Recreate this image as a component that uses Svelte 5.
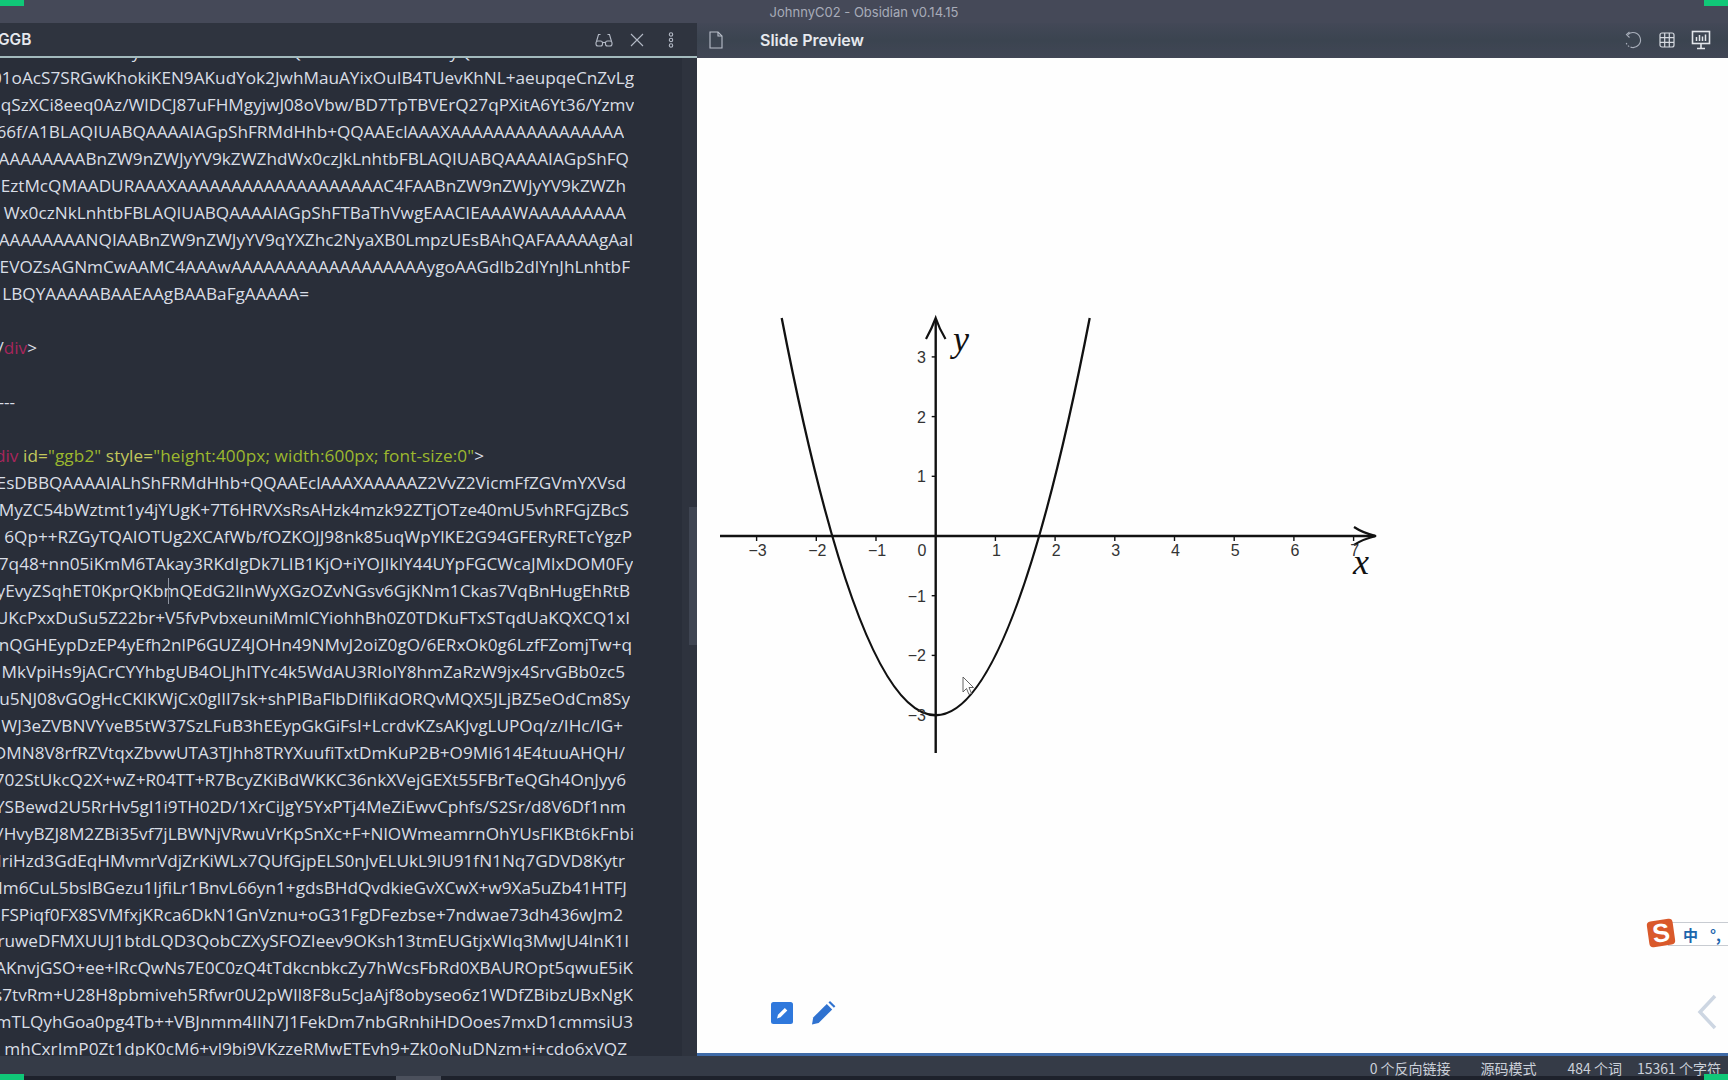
<script>
  const code = [
    { end: 630, text: 'ZGFsbHRoaXNsaWdybGluZXlzaGlkZGVuQW5kU29tZU90aGVyQ29udGVudGhlcmU2' },
    { end: 634, text: '01oAcS7SRGwKhokiKEN9AKudYok2JwhMauAYixOuIB4TUevKhNL+aeupqeCnZvLg' },
    { end: 634, text: 'qSzXCi8eeq0Az/WlDCJ87uFHMgyjwJ08oVbw/BD7TpTBVErQ27qPXitA6Yt36/Yzmv' },
    { end: 624, text: '66f/A1BLAQIUABQAAAAIAGpShFRMdHhb+QQAAEclAAAXAAAAAAAAAAAAAAAA' },
    { end: 629, text: 'AAAAAAAABnZW9nZWJyYV9kZWZhdWx0czJkLnhtbFBLAQIUABQAAAAIAGpShFQ' },
    { end: 626, text: 'EztMcQMAADURAAAXAAAAAAAAAAAAAAAAAAAC4FAABnZW9nZWJyYV9kZWZh' },
    { end: 626, text: 'Wx0czNkLnhtbFBLAQIUABQAAAAIAGpShFTBaThVwgEAACIEAAAWAAAAAAAAA' },
    { end: 633, text: 'AAAAAAAANQIAABnZW9nZWJyYV9qYXZhc2NyaXB0LmpzUEsBAhQAFAAAAAgAal' },
    { end: 630, text: 'EVOZsAGNmCwAAMC4AAAwAAAAAAAAAAAAAAAAAAygoAAGdlb2dlYnJhLnhtbF' },
    { end: 309, text: 'LBQYAAAAABAAEAAgBAABaFgAAAAA=' },
    { end: 0, text: '' },
    { end: 37, parts: [['/', ''], ['div', 'tag'], ['>', '']] },
    { end: 0, text: '' },
    { end: 15, text: '---' },
    { end: 0, text: '' },
    { end: 484, parts: [['<', ''], ['div', 'tag'], [' id=', 'attr'], ['"ggb2"', 'str'], [' style=', 'attr'], ['"height:400px; width:600px; font-size:0"', 'str'], ['>', '']] },
    { end: 626, text: 'EsDBBQAAAAIALhShFRMdHhb+QQAAEclAAAXAAAAAZ2VvZ2VicmFfZGVmYXVsd' },
    { end: 629, text: 'MyZC54bWztmt1y4jYUgK+7T6HRVXsRsAHzk4mzk92ZTjOTze40mU5vhRFGjZBcS' },
    { end: 632, text: '6Qp++RZGyTQAIOTUg2XCAfWb/fOZKOJJ98nk85uqWpYlKE2G94GFERyRETcYgzP' },
    { end: 633, text: '7q48+nn05iKmM6TAkay3RKdIgDk7LIB1KjO+iYOJIkIY44UYpFGCWcaJMlxDOM0Fy' },
    { end: 630, text: 'yEvyZSqhET0KprQKbmQEdG2lInWyXGzOZvNGsv6GjKNm1Ckas7VqBnHugEhRtB' },
    { end: 630, text: 'bUKcPxxDuSu5Z22br+V5fvPvbxeuniMmlCYiohhBh0Z0TDKuFTxSTqdUaKQXCQ1xI' },
    { end: 632, text: 'nQGHEypDzEP4yEfh2nlP6GUZ4JOHn49NMvJ2oiZ0gO/6ERxOk0g6LzfFZomjTw+q' },
    { end: 625, text: 'MkVpiHs9jACrCYYhbgUB4OLJhITYc4k5WdAU3RIoIY8hmZaRzW9jx4SrvGBb0zc5' },
    { end: 630, text: 'u5NJ08vGOgHcCKlKWjCx0glII7sk+shPIBaFlbDlfIiKdORQvMQX5JLjBZ5eOdCm8Sy' },
    { end: 623, text: 'WJ3eZVBNVYveB5tW37SzLFuB3hEEypGkGiFsI+LcrdvKZsAKJvgLUPOq/z/IHc/IG+' },
    { end: 625, text: 'DMN8V8rfRZVtqxZbvwUTA3TJhh8TRYXuufiTxtDmKuP2B+O9MI614E4tuuAHQH/' },
    { end: 626, text: '702StUkcQ2X+wZ+R04TT+R7BcyZKiBdWKKC36nkXVejGEXt55FBrTeQGh4OnJyy6' },
    { end: 626, text: 'YSBewd2U5RrHv5gI1i9TH02D/1XrCiJgY5YxPTj4MeZiEwvCphfs/S2Sr/d8V6Df1nm' },
    { end: 634, text: '/HvyBZJ8M2ZBi35vf7jLBWNjVRwuVrKpSnXc+F+NlOWmeamrnOhYUsFlKBt6kFnbi' },
    { end: 625, text: 'NriHzd3GdEqHMvmrVdjZrKiWLx7QUfGjpELS0nJvELUkL9lU91fN1Nq7GDVD8Kytr' },
    { end: 627, text: 'Im6CuL5bslBGezu1ljfiLr1BnvL66yn1+gdsBHdQvdkieGvXCwX+w9Xa5uZb41HTFJ' },
    { end: 623, text: 'FSPiqf0FX8SVMfxjKRca6DkN1GnVznu+oG31FgDFezbse+7ndwae73dh436wJm2' },
    { end: 629, text: 'ruweDFMXUUJ1btdLQD3QobCZXySFOZIeev9OKsh13tmEUGtjxWIq3MwJU4InK1I' },
    { end: 633, text: 'AKnvjGSO+ee+lRcQwNs7E0C0zQ4tTdkcnbkcZy7hWcsFbRd0XBAUROpt5qwuE5iK' },
    { end: 633, text: 's7tvRm+U28H8pbmiveh5Rfwr0U2pWIl8F8u5cJaAjf8obyseo6z1WDfZBibzUBxNgK' },
    { end: 633, text: 'mTLQyhGoa0pg4Tb++VBJnmm4IIN7J1FekDm7nbGRnhiHDOoes7mxD1cmmsiU3' },
    { end: 627, text: 'mhCxrImP0Zt1dpK0cM6+vl9bi9VKzzeRMwETEvh9+Zk0oNuDNzm+i+cdo6xVQZ' }
  ];

  // graph scale, in the svg's own coordinates
  const ox = 935.7;
  const oy = 536;
  const unit = 59.7;
  const xTicks = [-3, -2, -1, 1, 2, 3, 4, 5, 6, 7];
  const yTicks = [-3, -2, -1, 1, 2, 3];
  const label = (n) => (n < 0 ? '\u2212' + -n : '' + n);
</script>

<div class="app">
  <div class="titlebar">JohnnyC02 - Obsidian v0.14.15</div>

  <div class="workspace">
    <section class="pane left">
      <header class="tab">
        <span class="tab-name">GGB</span>
        <div class="tab-actions">
          <svg width="18" height="14" viewBox="0 0 18 14" fill="none" stroke="#b4bac6" stroke-width="1.1">
            <path d="M1.5 8.5 3.5 1.5H5.5M16.5 8.5 14.5 1.5H12.5" />
            <rect x="1" y="8" width="6.5" height="5" rx="2" />
            <rect x="10.5" y="8" width="6.5" height="5" rx="2" />
            <path d="M7.5 9.5h3" />
          </svg>
          <svg class="tab-close" width="14" height="14" viewBox="0 0 14 14" fill="none" stroke="#b4bac6" stroke-width="1.1">
            <path d="M1 1 13 13M13 1 1 13" />
          </svg>
          <svg width="6" height="16" viewBox="0 0 6 16" fill="none" stroke="#b4bac6" stroke-width="1.1">
            <circle cx="3" cy="2.5" r="1.7" />
            <circle cx="3" cy="8" r="1.7" />
            <circle cx="3" cy="13.5" r="1.7" />
          </svg>
        </div>
      </header>
      <div class="editor">
        <div class="lines">
          {#each code as row}
            <div class="line" style="width: {row.end}px">
              {#if row.parts}
                <span>{#each row.parts as p}<span class={p[1]}>{p[0]}</span>{/each}</span>
              {:else}
                <span>{row.text}</span>
              {/if}
            </div>
          {/each}
        </div>
        <div class="caret"></div>
        <div class="scroll-track"><div class="scroll-thumb"></div></div>
      </div>
    </section>

    <section class="pane right">
      <header class="tab">
        <svg class="file-icon" width="14" height="18" viewBox="0 0 14 18" fill="none" stroke="#b9bfca" stroke-width="1.1">
          <path d="M1 1H9L13 5V17H1Z" />
          <path d="M9 1V5H13" />
        </svg>
        <span class="tab-name slide-name">Slide Preview</span>
        <div class="tab-actions view-actions">
          <svg width="20" height="18" viewBox="0 0 20 18" fill="none" stroke="#a9afbb" stroke-width="1.1">
            <path d="M5 3.5A7.5 7.5 0 1 1 9 16.5" />
            <path d="M9 16.5A7.5 7.5 0 0 1 3.2 12" stroke-dasharray="1.5 1.5" />
            <path d="M6.5 1 3.5 3.6 6.5 6.5" />
          </svg>
          <svg width="16" height="16" viewBox="0 0 16 16" fill="none" stroke="#d5d9e0" stroke-width="1.2">
            <rect x="1" y="1" width="14" height="14" rx="2" />
            <path d="M5.7 1V15M10.3 1V15M1 5.7H15M1 10.3H15" />
          </svg>
          <svg width="20" height="20" viewBox="0 0 20 20" fill="none">
            <rect x="1.5" y="1.5" width="17" height="12" stroke="#e2e5ea" stroke-width="1.6" />
            <path d="M5.5 11V7M8.5 11V5M11.5 11V6.5M14.5 11V4.5" stroke="#e2e5ea" stroke-width="1.5" />
            <path d="M10 14V18M6 18.5H14" stroke="#e2e5ea" stroke-width="1.6" />
          </svg>
        </div>
      </header>

      <div class="slide">
        <svg class="graph" width="700" height="470" viewBox="700 300 700 470">
          <path d="M781.7 318Q935.7 1112.5 1089.7 318" fill="none" stroke="#111" stroke-width="2.3" />
          <g stroke="#111" stroke-width="1.4">
            {#each xTicks as n}
              <line x1={ox + n * unit} x2={ox + n * unit} y1={oy} y2={oy + 5} />
            {/each}
            {#each yTicks as n}
              <line x1={ox - 4} x2={ox} y1={oy - n * unit} y2={oy - n * unit} />
            {/each}
          </g>
          <path d="M720 536H1375M935.7 319V753" fill="none" stroke="#111" stroke-width="2.4" />
          <path d="M1354 527Q1363 533 1376 536Q1363 539 1354 545" fill="none" stroke="#111" stroke-width="2.2" />
          <path d="M926 339Q932 328 935.7 318Q939 328 945.5 339" fill="none" stroke="#111" stroke-width="2.2" />
          <g class="nums">
            {#each xTicks as n}
              <text x={ox + n * unit + (n < 0 ? 1 : 1)} y="556" text-anchor="middle">{label(n)}</text>
            {/each}
            <text x="922" y="556" text-anchor="middle">0</text>
            {#each yTicks as n}
              <text x="926" y={oy - n * unit + 6} text-anchor="end">{label(n)}</text>
            {/each}
          </g>
          <text class="var" x="1353" y="574">x</text>
          <text class="var" x="953" y="351">y</text>
        </svg>

        <svg class="mouse" width="13" height="20" viewBox="0 0 13 20">
          <path d="M1 1V16L4.5 12.5 7 18.5 9.5 17.5 7 11.5H11.5Z" fill="#fff" stroke="#555" stroke-width="0.9" />
        </svg>

        <div class="pens">
          <svg width="22" height="22" viewBox="0 0 22 22">
            <rect width="22" height="22" rx="2.5" fill="#2f78dc" />
            <path d="M6 16.5 7 12.8 13.8 6 16.3 8.5 9.5 15.3Z" fill="#fff" />
          </svg>
          <svg width="25" height="25" viewBox="0 0 25 25">
            <path d="M1 24.5 2.2 17.6 15.8 4 21.2 9.4 7.6 23Z" fill="#2f72d0" />
            <path d="M17.5 2.4 19 1 24.4 6.3 22.9 7.8Z" fill="#2f72d0" />
          </svg>
        </div>

        <div class="ime">
          <div class="ime-bar"><span class="ime-zh">中</span><span class="ime-dots">°,</span></div>
          <div class="ime-logo"><span>S</span></div>
        </div>

        <svg class="nav-prev" width="20" height="36" viewBox="0 0 20 36" fill="none">
          <path d="M18 2 3 18 18 34" stroke="#cdd6e2" stroke-width="3.5" />
        </svg>
      </div>
    </section>
  </div>

  <footer class="status">
    <span class="backlinks">0 个反向链接</span>
    <span class="mode">源码模式</span>
    <span class="words">484 个词</span>
    <span>15361 个字符</span>
  </footer>
  <div class="strip"><div class="strip-mark"></div></div>

  <div class="corner tl"></div>
  <div class="corner tr"></div>
  <div class="corner bl"></div>
  <div class="corner br"></div>
</div>

<style>
  :global(body) { margin: 0; background: #292e39; }

  .app {
    position: relative;
    width: 1728px; height: 1080px; overflow: hidden;
    display: flex; flex-direction: column;
    background: #292e39;
    font-family: Inter, "Noto Sans", sans-serif;
  }

  .titlebar {
    height: 23px; flex: none;
    display: flex; align-items: center; justify-content: center;
    background: #454958;
    color: #a8acb8; font-size: 13px;
  }

  .workspace { flex: 1; min-height: 0; display: flex; }
  .pane { display: flex; flex-direction: column; min-width: 0; }
  .left { width: 697px; flex: none; }
  .right { flex: 1; }

  .tab { height: 35px; flex: none; box-sizing: border-box; display: flex; align-items: center; }
  .left .tab {
    background: #2f343f;
    border-bottom: 2px solid #a3babd;
  }
  .right .tab {
    padding-bottom: 2px;
    background: linear-gradient(#434857, #3b4450 50%, #414655);
  }
  .tab-name { color: #e6e9ee; font-size: 15.5px; font-weight: 600; }
  .left .tab-name { margin-left: -2px; }
  .tab-actions { margin-left: auto; display: flex; align-items: center; gap: 17px; padding-right: 23px; }
  .tab-close { margin-right: 7px; }
  .file-icon { margin-left: 12px; }
  .slide-name { margin-left: 37px; font-size: 16px; }
  .view-actions { gap: 16px; padding-right: 17px; }

  .editor { flex: 1; min-height: 0; position: relative; overflow: hidden; }
  .lines {
    margin-top: -19.5px;
    font-family: "Open Sans", "Noto Sans", sans-serif;
    font-size: 17.2px; line-height: 26.97px; color: #d9dee6;
  }
  .line {
    height: 26.97px;
    display: flex; justify-content: flex-end;
    white-space: pre; overflow: hidden;
  }
  .tag { color: #a8265c; }
  .attr { color: #c3c85c; letter-spacing: 0.1px; }
  .str { color: #9cb82e; letter-spacing: 0.1px; }

  .caret { position: absolute; left: 168px; top: 520px; width: 1px; height: 26px; background: #8f95a1; }
  .scroll-track { position: absolute; top: 0; right: 0; bottom: 0; width: 15px; background: #2e333e; }
  .scroll-thumb { position: absolute; right: 0; top: 449px; width: 8px; height: 138px; background: #3f4552; }

  .slide {
    flex: 1; min-height: 0; position: relative;
    box-sizing: border-box;
    background: #fefefe;
    border-bottom: 3px solid #3f6ba8;
    padding: 242px 0 0 3px;
  }
  .graph { display: block; }
  .nums text { font-family: "Liberation Sans", sans-serif; font-size: 16px; fill: #333; }
  .var { font-family: "Liberation Serif", serif; font-style: italic; font-size: 36px; fill: #111; }

  .mouse { position: absolute; left: 265px; top: 618px; }

  .pens { position: absolute; left: 74px; bottom: 28px; display: flex; align-items: center; gap: 18px; }

  .ime { position: absolute; right: 0; top: 860px; display: flex; align-items: center; width: 82px; height: 32px; }
  .ime-bar {
    position: absolute; right: 0; top: 4px; width: 60px; height: 24px;
    box-sizing: border-box;
    display: flex; align-items: center; gap: 12px; padding-left: 14px;
    background: #fff; border: 1px solid #c8ccd2; border-right: none;
    color: #1d66ad; font-family: "Noto Sans CJK SC", sans-serif; font-size: 15px; font-weight: 700;
  }
  .ime-logo {
    position: absolute; left: 2px; top: 2px; width: 26px; height: 26px;
    display: flex; align-items: center; justify-content: center;
    background: #d9592b; border-radius: 4px; transform: rotate(-8deg);
    color: #fff; font-family: "Liberation Sans", sans-serif; font-size: 26px; font-weight: 700;
  }

  .nav-prev { position: absolute; right: 11px; bottom: 23px; }

  .status {
    height: 20px; flex: none;
    display: flex; align-items: center; justify-content: flex-end; gap: 10px;
    padding: 3px 7px 0 0;
    box-sizing: border-box;
    background: #353b47;
    color: #cbd0d9; font-family: "Noto Sans CJK SC", sans-serif; font-size: 14px;
  }
  .words { margin-right: 5px; }
  .mode { margin-right: 21px; }
  .backlinks { margin-right: 20px; }

  .strip { height: 4px; flex: none; background: #1e222c; position: relative; }
  .strip-mark { position: absolute; left: 396px; top: 0; width: 45px; height: 4px; background: #4b505c; }

  .corner { position: absolute; width: 24px; height: 6px; background: #10c878; }
  .tl { left: 0; top: 0; }
  .tr { right: 0; top: 0; }
  .bl { left: 0; bottom: 0; }
  .br { right: 0; bottom: 0; }
</style>
